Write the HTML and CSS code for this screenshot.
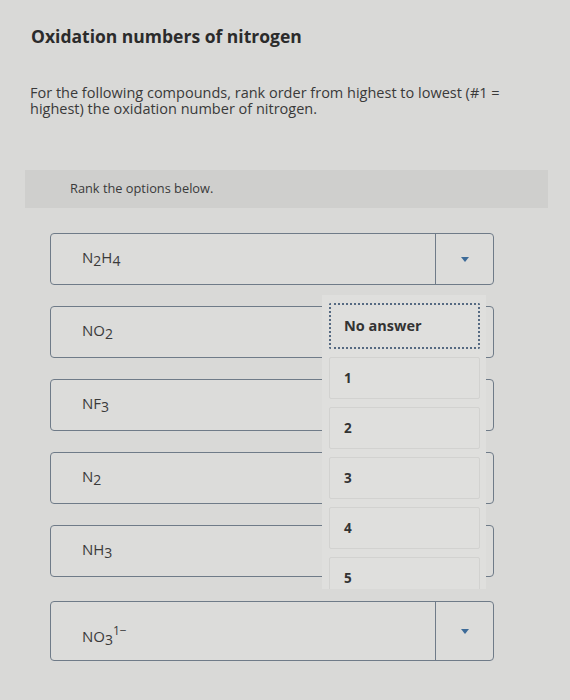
FILE: index.html
```
<!DOCTYPE html>
<html>
    <head>
        <meta charset="UTF-8">
        <title>Oxidation numbers of nitrogen</title>
        <link rel="stylesheet" href="styles.css">
    </head>
    <body>
        <h1 class="title">Oxidation numbers of nitrogen</h1>
        <p class="prompt">For the following compounds, rank order from highest to lowest (#1 = highest) the oxidation number of nitrogen.</p>

        <div class="panel">Rank the options below.</div>

        <div class="rows">
            <div class="row r1">
                <div class="label">N<sub>2</sub>H<sub>4</sub></div>
                <div class="pick"><span class="arrow"></span></div>
            </div>
            <div class="row r2">
                <div class="label">NO<sub>2</sub></div>
                <div class="pick"><span class="arrow"></span></div>
            </div>
            <div class="row r3">
                <div class="label">NF<sub>3</sub></div>
                <div class="pick"><span class="arrow"></span></div>
            </div>
            <div class="row r4">
                <div class="label">N<sub>2</sub></div>
                <div class="pick"><span class="arrow"></span></div>
            </div>
            <div class="row r5">
                <div class="label">NH<sub>3</sub></div>
                <div class="pick"><span class="arrow"></span></div>
            </div>
            <div class="row r6 tall">
                <div class="label">NO<sub>3</sub><sup>1&minus;</sup></div>
                <div class="pick"><span class="arrow"></span></div>
            </div>

            <ul class="menu">
                <li class="opt current">No answer</li>
                <li class="opt">1</li>
                <li class="opt">2</li>
                <li class="opt">3</li>
                <li class="opt">4</li>
                <li class="opt">5</li>
            </ul>
        </div>
    </body>
</html>
```

FILE: styles.css
```
html{
    background-color:#d9d9d7;
}
body{
    margin:0;
    font-family:"Open Sans", Lato, sans-serif;
    color:#333;
}
.title{
    margin:24px 0 0 31px;
    font-size:17.5px;
    line-height:24px;
    font-weight:bold;
    color:#2b2b2b;
}
.prompt{
    margin:37px 0 0 30px;
    width:492px;
    font-size:14.5px;
    line-height:16px;
    color:#3a3a3a;
}
.panel{
    margin:53px 0 0 25px;
    width:478px;
    height:38px;
    padding-left:45px;
    background:#cfcfcd;
    font-size:12.8px;
    line-height:36px;
    color:#3a3a3a;
}
.rows{
    position:relative;
    margin:25px 0 0 50px;
    width:444px;
    display:flex;
    flex-direction:column;
    gap:21px;
}
.row{
    display:flex;
    height:50px;
    border:1px solid #6f7b88;
    border-radius:4px;
    background:#dcdcda;
}
.row.tall{
    height:58px;
    margin-top:3px;
}
.label{
    flex:1;
    padding-left:31px;
    font-size:15px;
    line-height:46px;
    color:#3a3a3a;
}
.tall .label{
    line-height:58px;
}
.label sub{
    font-size:14px;
    vertical-align:-3px;
}
.label sup{
    font-size:12px;
    vertical-align:7px;
}
.pick{
    width:57px;
    border-left:1px solid #6f7b88;
    display:flex;
    align-items:center;
    justify-content:center;
}
.arrow{
    width:0;
    height:0;
    border-left:4.5px solid transparent;
    border-right:4.5px solid transparent;
    border-top:5px solid #3d6b98;
}
.menu{
    position:absolute;
    left:272px;
    top:62px;
    width:164px;
    height:294px;
    margin:0;
    padding:8px 6px 0 7px;
    box-sizing:border-box;
    overflow:hidden;
    list-style:none;
    background:#dfdfdd;
    display:flex;
    flex-direction:column;
    gap:8px;
}
.opt{
    flex:none;
    box-sizing:border-box;
    height:42px;
    padding-left:14px;
    border:1px solid #d2d2d0;
    border-radius:2px;
    font-size:13.5px;
    font-weight:bold;
    line-height:40px;
    color:#333;
}
.opt.current{
    height:46px;
    padding-left:13px;
    border:2px dotted #566a82;
    font-size:14.5px;
    line-height:42px;
}
```
